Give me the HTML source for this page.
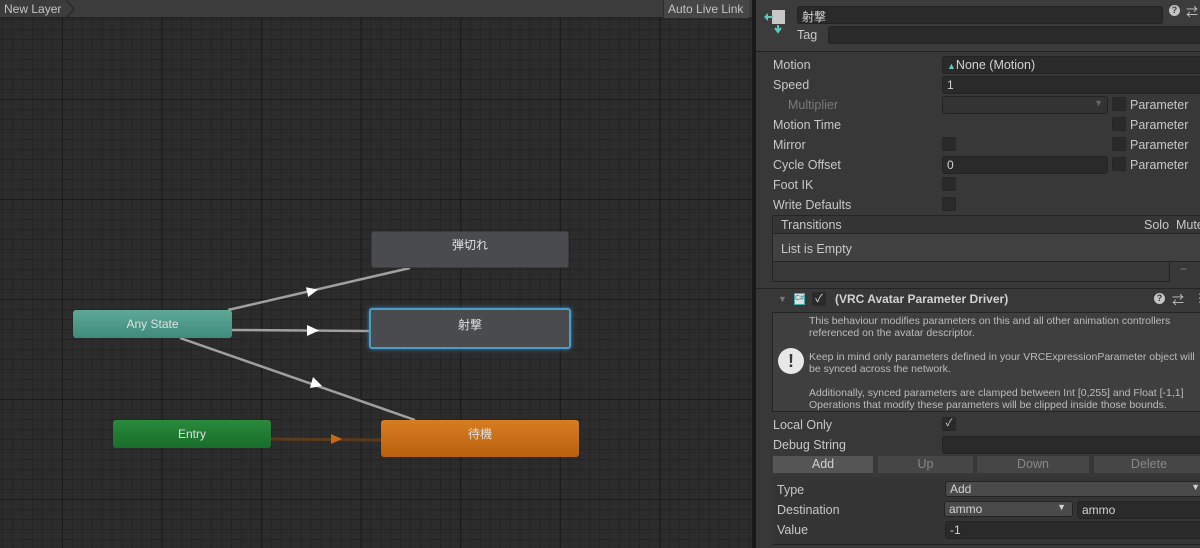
<!DOCTYPE html>
<html><head><meta charset="utf-8"><style>
*{box-sizing:border-box;margin:0;padding:0}
body{width:1200px;height:548px;overflow:hidden;background:#383838;font-family:"Liberation Sans","Noto Sans CJK JP",sans-serif;font-size:12px;color:#c8c8c8;position:relative}
.a{position:absolute}
#canvas{left:0;top:0;width:752px;height:548px;background-color:#2c2c2c;
background-image:
linear-gradient(90deg,#1b1b1b 0 1px,transparent 1px),
linear-gradient(0deg,#1b1b1b 0 1px,transparent 1px),
linear-gradient(90deg,#242424 0 1px,transparent 1px),
linear-gradient(0deg,#242424 0 1px,transparent 1px);
background-size:99.6px 100px,99.6px 100px,9.96px 10px,9.96px 10px;
background-position:62px 0,0 0,2px 0,0 0}
#bar{left:0;top:0;width:752px;height:18px;background:#3c3c3c;border-bottom:1px solid #222}
.node{position:absolute;border-radius:3px;text-align:center;color:#e0e0e0;font-size:12px}
.in{position:absolute;background:#2a2a2a;border:1px solid #232323;border-radius:3px;height:18px;padding:1px 4px;color:#d2d2d2}
.cb{position:absolute;width:14px;height:14px;background:#2a2a2a;border:1px solid #262626;border-radius:2px}
.lbl{position:absolute;left:773px;font-size:12.5px}
.btn{position:absolute;top:456px;height:17px;background:#464646;text-align:center;color:#888;line-height:17px;font-size:12.5px}
</style></head><body>
<div id="canvas" class="a"></div>
<div id="bar" class="a"><span class="a" style="left:4px;top:2px;color:#c4c4c4;font-size:12px">New Layer</span>
<svg class="a" style="left:66px;top:0" width="10" height="18"><path d="M0 0 L8 9 L0 18" fill="none" stroke="#222"/></svg>
<div class="a" style="left:663px;top:0;width:86px;height:18px;background:#464646;border-left:1px solid #2a2a2a;color:#c4c4c4;padding:2px 4px">Auto Live Link</div></div>
<div class="a" style="left:752px;top:0;width:4px;height:548px;background:#191919"></div>
<svg class="a" style="left:0;top:0" width="752" height="548">
<line x1="228" y1="310" x2="410" y2="268" stroke="#a0a0a0" stroke-width="2.5"/>
<polygon points="318,289.6 308.2,297 306,287.2" fill="#fff"/>
<line x1="232" y1="330" x2="370" y2="331" stroke="#a0a0a0" stroke-width="2.5"/>
<polygon points="307,325 319,330.5 307,336" fill="#fff"/>
<line x1="180" y1="338" x2="415" y2="420" stroke="#a0a0a0" stroke-width="2.5"/>
<polygon points="310,388 322,386 313,377" fill="#fff"/>
<line x1="271" y1="439" x2="381" y2="440" stroke="#5a3a1a" stroke-width="3"/>
<polygon points="331,434 342,439 331,444" fill="#c46a18"/>
</svg>
<div class="node" style="left:371px;top:231px;width:198px;height:37px;background:#4a4b4e;border:1px solid #3a3a3a;line-height:26px">弾切れ</div>
<div class="node" style="left:369px;top:308px;width:202px;height:41px;background:#4a4b4e;border:2px solid #4c9cc8;box-shadow:0 0 4px #3a8ab8;line-height:30px">射撃</div>
<div class="node" style="left:73px;top:310px;width:159px;height:28px;background:linear-gradient(#5fa898,#3e8a7c);line-height:28px">Any State</div>
<div class="node" style="left:113px;top:420px;width:158px;height:28px;background:linear-gradient(#2a8a3c,#186e2a);line-height:28px">Entry</div>
<div class="node" style="left:381px;top:420px;width:198px;height:37px;background:linear-gradient(#d77c22,#b8620f);line-height:28px">待機</div>

<!-- inspector -->
<div class="a" style="left:756px;top:0;width:444px;height:52px;background:#3c3c3c;border-bottom:1px solid #242424"></div>
<svg class="a" style="left:763px;top:7px" width="30" height="28"><rect x="9" y="3" width="13" height="14" fill="#c8c8c8"/><path d="M1 10 L5 6 L5 14Z M4 9h6v2H4z" fill="#5fc8b8"/><path d="M15 18v6 M12 21 L15 25 L18 21" stroke="#5fc8b8" stroke-width="2" fill="none"/></svg>
<div class="in" style="left:797px;top:6px;width:366px;height:18px">射撃</div>
<div class="a" style="left:1169px;top:5px;width:11px;height:11px;border-radius:50%;background:#c4c4c4;color:#383838;font-size:9px;font-weight:bold;text-align:center;line-height:11px">?</div>
<div class="a" style="left:1186px;top:3px;color:#c4c4c4;font-size:12px">⇄</div>
<span class="a" style="left:797px;top:28px;font-size:12.5px">Tag</span>
<div class="in" style="left:828px;top:26px;width:380px"></div>

<span class="lbl" style="top:58px">Motion</span>
<div class="in" style="left:942px;top:56px;width:270px;font-size:12.5px"><span style="color:#5fc8b8;font-size:9px">▲</span>None (Motion)</div>
<span class="lbl" style="top:78px">Speed</span>
<div class="in" style="left:942px;top:76px;width:270px">1</div>
<span class="lbl" style="top:98px;left:788px;color:#7a7a7a">Multiplier</span>
<div class="in" style="left:942px;top:96px;width:166px;background:#333"><span style="position:absolute;right:4px;top:1px;color:#666;font-size:9px">▼</span></div>
<span class="lbl" style="top:118px">Motion Time</span>
<span class="lbl" style="top:138px">Mirror</span>
<span class="lbl" style="top:158px">Cycle Offset</span>
<div class="in" style="left:942px;top:156px;width:166px">0</div>
<span class="lbl" style="top:178px">Foot IK</span>
<span class="lbl" style="top:198px">Write Defaults</span>
<div class="cb" style="left:942px;top:137px"></div>
<div class="cb" style="left:942px;top:177px"></div>
<div class="cb" style="left:942px;top:197px"></div>
<div class="cb" style="left:1112px;top:97px"></div><span class="a" style="left:1130px;top:98px;font-size:12.5px">Parameter</span>
<div class="cb" style="left:1112px;top:117px"></div><span class="a" style="left:1130px;top:118px;font-size:12.5px">Parameter</span>
<div class="cb" style="left:1112px;top:137px"></div><span class="a" style="left:1130px;top:138px;font-size:12.5px">Parameter</span>
<div class="cb" style="left:1112px;top:157px"></div><span class="a" style="left:1130px;top:158px;font-size:12.5px">Parameter</span>

<div class="a" style="left:772px;top:215px;width:440px;height:19px;background:#353535;border:1px solid #242424"></div>
<span class="a" style="left:781px;top:218px;font-size:12.5px">Transitions</span>
<span class="a" style="left:1144px;top:218px;font-size:12.5px">Solo&nbsp;&nbsp;Mute</span>
<div class="a" style="left:772px;top:234px;width:440px;height:28px;background:#414141;border:1px solid #242424;border-top:none"></div>
<span class="a" style="left:781px;top:242px;font-size:12.5px">List is Empty</span>
<div class="a" style="left:772px;top:262px;width:398px;height:20px;border:1px solid #242424;border-top:none"></div>
<span class="a" style="left:1180px;top:262px;color:#888">−</span>

<div class="a" style="left:756px;top:288px;width:444px;height:1px;background:#242424"></div>
<span class="a" style="left:778px;top:294px;color:#777;font-size:9px">▼</span>
<div class="a" style="left:794px;top:293px;width:11px;height:12px;background:#ddd;border:1px solid #4aa;font-size:7px;color:#288;text-align:center;line-height:10px">C#</div>
<div class="a" style="left:812px;top:292px;width:14px;height:14px;background:#2a2a2a;border-radius:2px;color:#ddd;font-size:11px;text-align:center;line-height:14px">✓</div>
<span class="a" style="left:835px;top:292px;font-weight:bold;color:#d2d2d2">(VRC Avatar Parameter Driver)</span>
<div class="a" style="left:1154px;top:293px;width:11px;height:11px;border-radius:50%;background:#c4c4c4;color:#383838;font-size:9px;font-weight:bold;text-align:center;line-height:11px">?</div>
<span class="a" style="left:1172px;top:291px;color:#c4c4c4">⇄</span><span class="a" style="left:1194px;top:291px;color:#c4c4c4">⋮</span>

<div class="a" style="left:772px;top:312px;width:440px;height:100px;background:#3f3f3f;border:1px solid #242424;border-right:none"></div>
<div class="a" style="left:778px;top:348px;width:26px;height:26px;border-radius:50%;background:#e8e8e8;color:#383838;font-weight:bold;font-size:18px;text-align:center;line-height:26px">!</div>
<div class="a" style="left:809px;top:315px;font-size:10.5px;line-height:12px;color:#bcbcbc;white-space:nowrap">This behaviour modifies parameters on this and all other animation controllers<br>referenced on the avatar descriptor.<br><br>Keep in mind only parameters defined in your VRCExpressionParameter object will<br>be synced across the network.<br><br>Additionally, synced parameters are clamped between Int [0,255] and Float [-1,1]<br>Operations that modify these parameters will be clipped inside those bounds.</div>

<span class="lbl" style="top:418px">Local Only</span>
<div class="cb" style="left:942px;top:417px;color:#ddd;font-size:10px;text-align:center;line-height:12px">✓</div>
<span class="lbl" style="top:438px">Debug String</span>
<div class="in" style="left:942px;top:436px;width:270px"></div>
<div class="btn" style="left:773px;width:100px;color:#d2d2d2;background:#555">Add</div>
<div class="btn" style="left:878px;width:95px">Up</div>
<div class="btn" style="left:977px;width:112px">Down</div>
<div class="btn" style="left:1094px;width:110px">Delete</div>

<div class="a" style="left:772px;top:477px;width:430px;height:68px;background:#353535;border-bottom:1px solid #242424"></div>
<span class="a" style="left:777px;top:483px;font-size:12.5px">Type</span>
<span class="a" style="left:777px;top:503px;font-size:12.5px">Destination</span>
<span class="a" style="left:777px;top:523px;font-size:12.5px">Value</span>
<div class="in" style="left:945px;top:481px;width:260px;background:#4a4a4a;height:16px;padding-top:0">Add<span style="position:absolute;right:4px;font-size:9px">▼</span></div>
<div class="in" style="left:944px;top:501px;width:129px;background:#4a4a4a;height:16px;padding-top:0">ammo<span style="position:absolute;right:6px;font-size:9px">▼</span></div>
<div class="in" style="left:1077px;top:501px;width:130px">ammo</div>
<div class="in" style="left:945px;top:521px;width:260px">-1</div>
</body></html>
